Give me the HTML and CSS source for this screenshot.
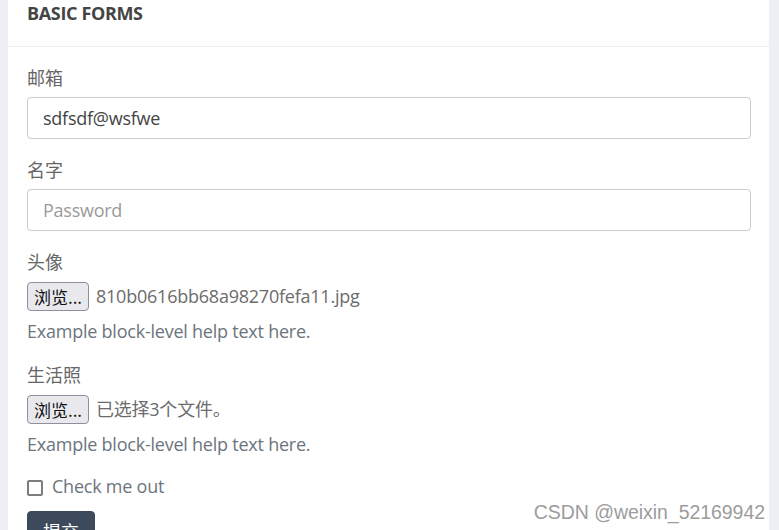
FILE: index.html
```html
<!DOCTYPE html>
<html lang="zh">
<head>
<meta charset="utf-8">
<title>Basic Forms</title>
<link rel="stylesheet" href="styles.css">
</head>
<body>
<div class="page">
  <div class="card">
    <div class="card-header">BASIC FORMS</div>
    <div class="card-body">
      <form class="form">
        <div class="group">
          <label class="label">邮箱</label>
          <input class="control" type="text" value="sdfsdf@wsfwe">
        </div>
        <div class="group">
          <label class="label">名字</label>
          <input class="control" type="text" placeholder="Password">
        </div>
        <div class="group group-help">
          <label class="label label-file">头像</label>
          <div class="file-row">
            <span class="file-btn">浏览...</span>
            <span class="file-name">810b0616bb68a98270fefa11.jpg</span>
          </div>
          <div class="help">Example block-level help text here.</div>
        </div>
        <div class="group group-help">
          <label class="label label-file">生活照</label>
          <div class="file-row">
            <span class="file-btn">浏览...</span>
            <span class="file-name">已选择3个文件。</span>
          </div>
          <div class="help">Example block-level help text here.</div>
        </div>
        <div class="check-row">
          <input class="check" type="checkbox">
          <span class="check-label">Check me out</span>
        </div>
        <button class="submit" type="button">提交</button>
      </form>
    </div>
  </div>
</div>
<div class="watermark">CSDN @weixin_52169942</div>
</body>
</html>
```

FILE: styles.css
```css
html, body {
  margin: 0;
  height: 530px;
  overflow: hidden;
}
body {
  background: #eeeff4;
  font-family: "Open Sans", "Noto Sans CJK SC", sans-serif;
  font-size: 18px;
  line-height: 27px;
  letter-spacing: -0.23px;
  color: #666;
  position: relative;
}
.page {
  padding: 0 10px 0 8px;
}
.card {
  background: #fff;
  height: 560px;
}
.card-header {
  padding: 0 19px 19px;
  font-weight: 700;
  font-size: 18px;
  line-height: 27px;
  letter-spacing: -0.35px;
  color: #444;
  border-bottom: 1px solid #f0f0f0;
  box-shadow: inset 0 -5px 0 #fcfcfc;
}
.card-body {
  padding: 19px 18px 0 19px;
}
.form {
  display: flex;
  flex-direction: column;
}
.group {
  display: flex;
  flex-direction: column;
  margin-bottom: 19px;
}
.group-help {
  margin-bottom: 18px;
}
.label {
  display: block;
  line-height: 24px;
  margin-bottom: 7px;
  color: #666;
  letter-spacing: 0;
}
.label-file {
  margin-bottom: 8px;
}
.control {
  box-sizing: border-box;
  height: 42px;
  width: 100%;
  padding: 0 15px;
  border: 1px solid #cccccc;
  border-radius: 4px;
  font-family: "Open Sans", "Noto Sans CJK SC", sans-serif;
  font-size: 18px;
  letter-spacing: -0.25px;
  color: #444;
  background: #fff;
  outline: none;
}
.control::placeholder {
  color: #9a9a9a;
}
.file-row {
  display: flex;
  align-items: center;
  height: 29px;
  gap: 7px;
}
.file-btn {
  box-sizing: border-box;
  width: 62px;
  height: 29px;
  display: flex;
  align-items: center;
  justify-content: center;
  background: #e9e9ed;
  border: 1px solid #8f8f9d;
  border-radius: 4px;
  font-family: "Noto Sans CJK SC", sans-serif;
  font-size: 17px;
  line-height: 1;
  letter-spacing: 0;
  color: #111;
}
.file-name {
  color: #6c6c6c;
  font-size: 18px;
  line-height: 27px;
}
.help {
  margin-top: 7px;
  color: #6c757d;
}
.check-row {
  display: flex;
  align-items: center;
  gap: 9px;
  height: 27px;
  margin-top: -3px;
  margin-bottom: 11px;
}
.check {
  appearance: none;
  -webkit-appearance: none;
  box-sizing: border-box;
  width: 16px;
  height: 16px;
  margin: 2px 0 0;
  border: 2px solid #7d7d7d;
  border-radius: 2px;
  background: #fff;
}
.check-label {
  color: #6c757d;
}
.submit {
  align-self: flex-start;
  box-sizing: border-box;
  height: 42px;
  padding: 6px 15px;
  border: 1px solid #3b4758;
  border-radius: 4px;
  background: #3d4a5c;
  color: #fff;
  font-family: "Open Sans", "Noto Sans CJK SC", sans-serif;
  font-size: 18px;
  line-height: 27px;
}
.watermark {
  position: absolute;
  top: 502px;
  right: 14px;
  font-family: "Liberation Sans", Arial, sans-serif;
  font-size: 19.5px;
  line-height: 20px;
  letter-spacing: -0.05px;
  color: #9c9c9c;
  white-space: nowrap;
}
```
